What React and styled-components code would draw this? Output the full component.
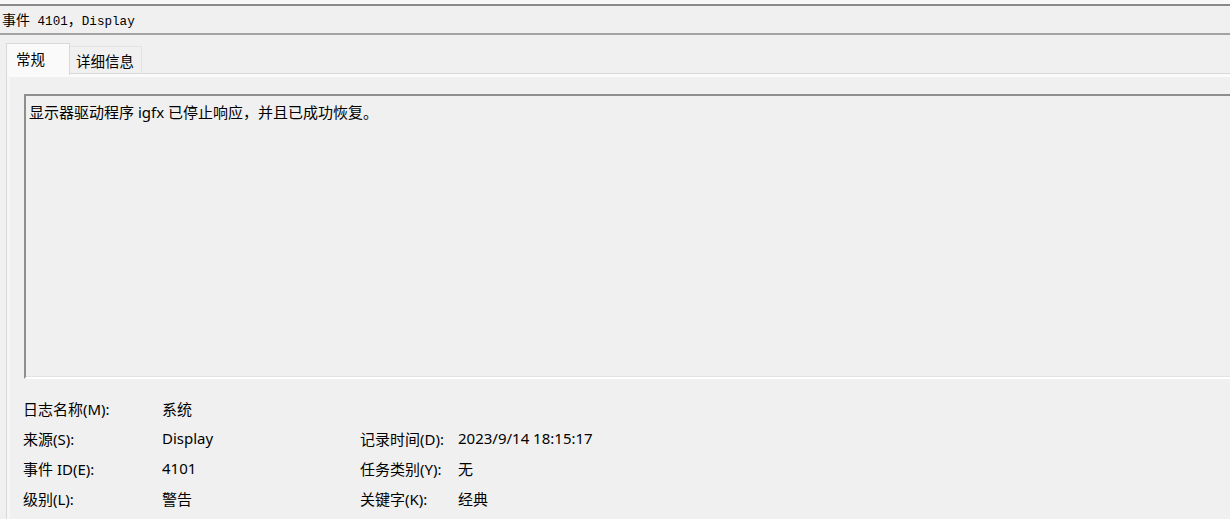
import React from 'react'
import styled, { createGlobalStyle } from 'styled-components'

const GlobalStyle = createGlobalStyle`
  html, body {
    margin: 0;
    padding: 0;
    background: #f0f0f0;
    overflow: hidden;
  }
  body {
    font-family: "Noto Sans", "Noto Sans CJK SC", sans-serif;
    color: #000;
  }
`

const rows = [
  { label: '日志名称(M):', value: '系统' },
  { label: '来源(S):', value: 'Display', label2: '记录时间(D):', value2: '2023/9/14 18:15:17' },
  { label: '事件 ID(E):', value: '4101', label2: '任务类别(Y):', value2: '无' },
  { label: '级别(L):', value: '警告', label2: '关键字(K):', value2: '经典' },
]

function App() {
  return (
    <Window>
      <GlobalStyle />
      <TopEdge />
      <TitleBar>
        <CjkTitle>事件</CjkTitle>
        <MonoTitle>&nbsp;4101</MonoTitle>
        <CjkTitle>，</CjkTitle>
        <MonoTitle>Display</MonoTitle>
      </TitleBar>
      <Separator />

      <TabStrip>
        <Tab active>常规</Tab>
        <Tab>详细信息</Tab>
      </TabStrip>

      <Panel>
        <PanelInner>
          <MessageBox>显示器驱动程序 igfx 已停止响应，并且已成功恢复。</MessageBox>

          <InfoGrid>
            {rows.map(r => (
              <React.Fragment key={r.label}>
                <Label>{r.label}</Label>
                <Value>{r.value}</Value>
                <Label>{r.label2 || ''}</Label>
                <Value>{r.value2 || ''}</Value>
              </React.Fragment>
            ))}
          </InfoGrid>
        </PanelInner>
      </Panel>
    </Window>
  )
}

export default App

const Window = styled.div`
  width: 1230px;
  height: 519px;
  overflow: hidden;
  display: flex;
  flex-direction: column;
`

const TopEdge = styled.div`
  height: 4px;
  background: #f8f8f8;
  border-bottom: 2px solid #8a8a8a;
  flex-shrink: 0;
`

const TitleBar = styled.div`
  height: 27px;
  display: flex;
  align-items: baseline;
  padding: 3px 0 0 2px;
  box-sizing: border-box;
  flex-shrink: 0;
`

const CjkTitle = styled.span`
  font-family: "Noto Sans CJK SC", sans-serif;
  font-size: 14px;
  line-height: 20px;
`

const MonoTitle = styled.span`
  font-family: "Liberation Mono", monospace;
  font-size: 12.6px;
  line-height: 20px;
`

const Separator = styled.div`
  height: 2px;
  background: #a3a3a3;
  flex-shrink: 0;
`

const TabStrip = styled.div`
  display: flex;
  align-items: flex-end;
  padding-left: 6px;
  margin-top: 8px;
  height: 30px;
  position: relative;
  z-index: 1;
  flex-shrink: 0;
`

const Tab = styled.div`
  font-family: "Noto Sans CJK SC", sans-serif;
  font-size: 14.5px;
  box-sizing: border-box;
  display: flex;
  align-items: center;
  width: ${p => (p.active ? '64px' : '72px')};
  height: ${p => (p.active ? '32px' : '27px')};
  margin-bottom: ${p => (p.active ? '-2px' : '0')};
  padding: ${p => (p.active ? '0 0 2px 9px' : '0 0 0 6px')};
  background: ${p => (p.active ? '#fafafa' : '#f0f0f0')};
  border: 1px solid ${p => (p.active ? '#d9d9d9' : '#e3e3e3')};
  border-bottom: none;
  border-left: ${p => (p.active ? '1px solid #d9d9d9' : 'none')};
`

const Panel = styled.div`
  flex: 1;
  margin-left: 6px;
  border-top: 1px solid #d9d9d9;
  border-left: 1px solid #d9d9d9;
  background: #f0f0f0;
  display: flex;
`

const PanelInner = styled.div`
  flex: 1;
  border-top: 3px solid #fbfbfb;
  border-left: 3px solid #f6f6f6;
  padding: 17px 0 0 14px;
  display: flex;
  flex-direction: column;
`

const MessageBox = styled.div`
  height: 275px;
  flex-shrink: 0;
  margin-right: -30px;
  padding: 6px 3px 0 3px;
  background: #f0f0f0;
  border-top: 2px solid #8e8e8e;
  border-left: 2px solid #8e8e8e;
  border-bottom: 2px solid #fff;
  border-right: 2px solid #fff;
  box-shadow: inset 0 -1px 0 #e3e3e3;
  font-family: "Noto Sans", "Noto Sans CJK SC", sans-serif;
  font-size: 15px;
  line-height: 20px;
`

const InfoGrid = styled.div`
  display: grid;
  grid-template-columns: 139px 198px 98px auto;
  grid-auto-rows: 30px;
  align-items: center;
  margin-top: 14px;
  margin-left: -1px;
`

const Label = styled.div`
  font-size: 15px;
  white-space: nowrap;
`

const Value = styled(Label)``
